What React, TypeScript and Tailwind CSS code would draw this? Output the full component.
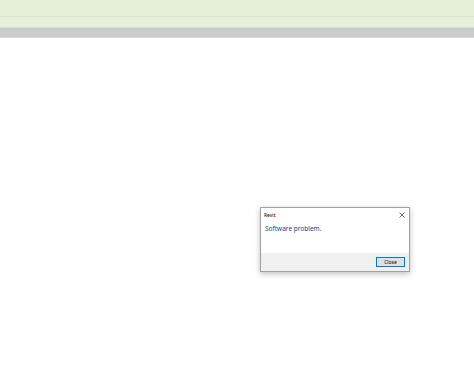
export default function App() {
  return (
    <div className="w-[474px] h-[368px] bg-white flex flex-col overflow-hidden" style={{ fontFamily: '"Noto Sans", "Liberation Sans", sans-serif' }}>
      <div className="h-[17px] bg-[#e6f0d8] border-b border-[#dbe6cc] shrink-0" />
      <div className="h-[11px] bg-[#e6f0d8] border-b border-[#d8dccf] shrink-0" />
      <div className="h-[10px] bg-[#cbcbcb] border-b border-[#d6d6d6] shrink-0" />
      <div className="flex-1 flex pl-[260px] pt-[169px]">
        <div className="w-[150px] h-[65px] flex flex-col bg-white border border-[#a0a0a0] shadow-[0_2px_6px_rgba(0,0,0,0.25)]">
          <div className="h-[13px] flex items-center justify-between pl-[3px] pr-[4px] pt-[1px]">
            <span className="text-[5px] text-black leading-none">Revit</span>
            <svg width="6" height="6" viewBox="0 0 6 6">
              <path d="M0.5 0.5 L5.5 5.5 M5.5 0.5 L0.5 5.5" stroke="#444" strokeWidth="0.8" fill="none" />
            </svg>
          </div>
          <div className="flex-1 pl-[4px] pt-[4px]">
            <div className="text-[6.5px] text-[#1e3f8a] leading-[8px]">Software problem.</div>
          </div>
          <div className="h-[18px] bg-[#f0f0f0] flex items-center justify-end pr-[4px]">
            <div className="w-[29px] h-[10px] bg-[#e1e1e1] border border-[#0078d7] flex items-center justify-center text-[5px] text-black leading-none">Close</div>
          </div>
        </div>
      </div>
    </div>
  );
}
